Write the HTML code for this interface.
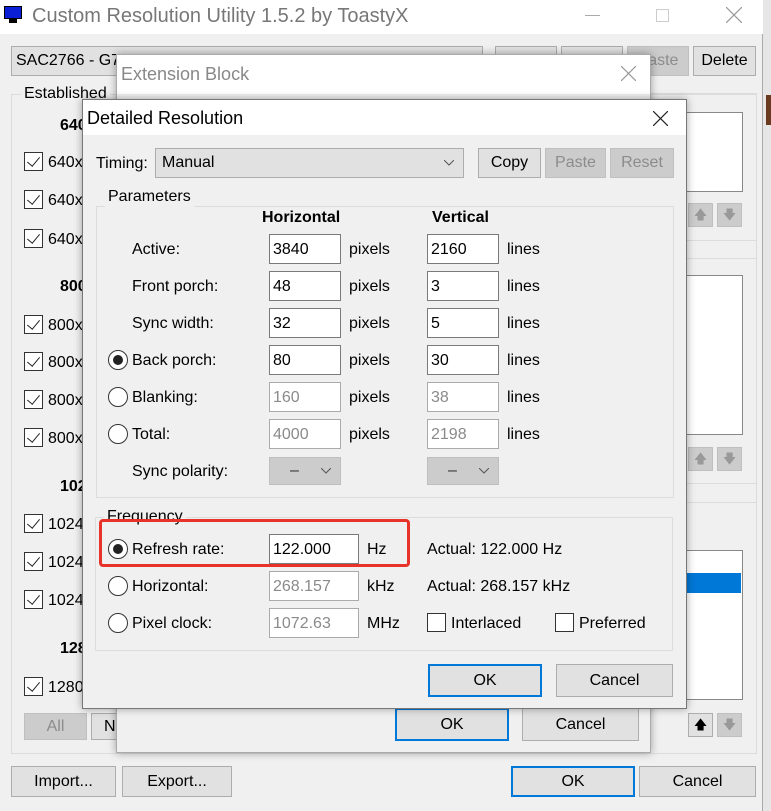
<!DOCTYPE html>
<html><head><meta charset="utf-8"><style>
*{box-sizing:border-box;margin:0;padding:0}
body{width:771px;height:811px;overflow:hidden;background:#f0f0f0;font-family:"Liberation Sans",sans-serif;font-size:16px;color:#000;position:relative}
.a{position:absolute}
.t{position:absolute;white-space:nowrap;line-height:20px}
.btn{position:absolute;background:#e1e1e1;border:1px solid #adadad;text-align:center;white-space:nowrap}
.dis{background:#cccccc;border-color:#bfbfbf;color:#8c8c8c}
.def{border:2px solid #0078d7}
.inp{position:absolute;background:#fff;border:1px solid #7a7a7a;height:30px;line-height:30px;padding-left:3px}
.ro{color:#8a8a8a;border-color:#aaa}
.cb{position:absolute;width:19px;height:19px;border:1px solid #333;background:#fff}
.cb.k::after{content:"";position:absolute;left:5px;top:1px;width:6px;height:11px;border-right:1.5px solid #222;border-bottom:1.5px solid #222;transform:rotate(40deg)}
.rd{position:absolute;width:20px;height:20px;border:1px solid #333;border-radius:50%;background:#fff}
.rd.on::after{content:"";position:absolute;left:4px;top:4px;width:10px;height:10px;border-radius:50%;background:#222}
.grp{position:absolute;border:1px solid #dcdcdc}
.gt{position:absolute;background:#f0f0f0;padding:0 3px;line-height:20px}
.arr{position:absolute;width:25px;height:24px;background:#ccc;border:1px solid #bfbfbf;color:#999;text-align:center;font-size:13px;line-height:22px}
.shadow{box-shadow:0 0 8px rgba(0,0,0,.35)}
.chev{position:absolute;right:9px;top:50%;margin-top:-3px}
</style></head><body>
<div class="a" style="left:763px;top:0;width:8px;height:811px;background:#e6e6e6"></div>
<div class="a" style="left:766px;top:95px;width:5px;height:30px;background:#6a3a20"></div>
<div class="a" style="left:0;top:0;width:763px;height:811px;background:#f0f0f0;border-right:1px solid #aaa"></div>
<div class="a" style="left:0;top:0;width:763px;height:34px;background:#fff"></div>
<div class="a" style="left:4px;top:6px;width:18px;height:13px;background:#0a1fd6;border:1px solid #000"></div>
<div class="a" style="left:9px;top:19px;width:8px;height:4px;background:#000"></div>
<div class="t" style="left:32px;top:5px;font-size:20px;line-height:22px;color:#777">Custom Resolution Utility 1.5.2 by ToastyX</div>
<div class="a" style="left:585px;top:15px;width:15px;height:1px;background:#aaa"></div>
<div class="a" style="left:656px;top:9px;width:13px;height:13px;border:1px solid #ccc"></div>
<svg class="a" style="left:726px;top:7px" width="16" height="16"><path d="M0 0L16 16M16 0L0 16" stroke="#999" stroke-width="1.2"/></svg>

<div class="btn" style="left:11px;top:46px;width:472px;height:30px;text-align:left;padding-left:4px;line-height:28px">SAC2766 - G7</div>
<div class="btn" style="left:495px;top:46px;width:62px;height:30px"></div>
<div class="btn" style="left:561px;top:46px;width:62px;height:30px"></div>
<div class="btn dis" style="left:627px;top:46px;width:62px;height:30px;line-height:28px">Paste</div>
<div class="btn" style="left:693px;top:46px;width:63px;height:30px;line-height:28px">Delete</div>

<div class="grp" style="left:11px;top:94px;width:746px;height:660px"></div>
<div class="gt" style="left:21px;top:84px">Established</div>
<div class="t" style="left:60px;top:116px;font-weight:bold">640</div>
<div class="cb k" style="left:24px;top:152px"></div><div class="t" style="left:48px;top:153px">640x</div>
<div class="cb k" style="left:24px;top:190px"></div><div class="t" style="left:48px;top:191px">640x</div>
<div class="cb k" style="left:24px;top:229px"></div><div class="t" style="left:48px;top:230px">640x</div>
<div class="t" style="left:60px;top:277px;font-weight:bold">800</div>
<div class="cb k" style="left:24px;top:315px"></div><div class="t" style="left:48px;top:316px">800x</div>
<div class="cb k" style="left:24px;top:352px"></div><div class="t" style="left:48px;top:353px">800x</div>
<div class="cb k" style="left:24px;top:390px"></div><div class="t" style="left:48px;top:391px">800x</div>
<div class="cb k" style="left:24px;top:428px"></div><div class="t" style="left:48px;top:429px">800x</div>
<div class="t" style="left:60px;top:477px;font-weight:bold">102</div>
<div class="cb k" style="left:24px;top:514px"></div><div class="t" style="left:48px;top:515px">1024</div>
<div class="cb k" style="left:24px;top:552px"></div><div class="t" style="left:48px;top:553px">1024</div>
<div class="cb k" style="left:24px;top:590px"></div><div class="t" style="left:48px;top:591px">1024</div>
<div class="t" style="left:60px;top:639px;font-weight:bold">128</div>
<div class="cb k" style="left:24px;top:677px"></div><div class="t" style="left:48px;top:678px">1280</div>
<div class="btn dis" style="left:24px;top:713px;width:63px;height:27px;line-height:25px">All</div>
<div class="btn" style="left:91px;top:713px;width:40px;height:27px;line-height:25px;text-align:left;padding-left:12px">No</div>

<div class="grp" style="left:640px;top:93px;width:117px;height:148px"></div>
<div class="a" style="left:640px;top:112px;width:103px;height:80px;background:#fff;border:1px solid #888"></div>
<div class="arr" style="left:688px;top:203px">🡅</div><div class="arr" style="left:717px;top:203px">🡇</div>
<div class="grp" style="left:640px;top:258px;width:117px;height:226px"></div>
<div class="a" style="left:640px;top:275px;width:103px;height:160px;background:#fff;border:1px solid #888"></div>
<div class="arr" style="left:688px;top:447px">🡅</div><div class="arr" style="left:717px;top:447px">🡇</div>
<div class="grp" style="left:640px;top:502px;width:117px;height:252px"></div>
<div class="a" style="left:640px;top:550px;width:103px;height:150px;background:#fff;border:1px solid #888"></div>
<div class="a" style="left:640px;top:573px;width:101px;height:20px;background:#0078d7"></div>
<div class="arr" style="left:688px;top:713px;color:#000;background:#e1e1e1;border-color:#adadad">🡅</div><div class="arr" style="left:717px;top:713px">🡇</div>

<div class="btn" style="left:11px;top:766px;width:105px;height:31px;line-height:29px">Import...</div>
<div class="btn" style="left:122px;top:766px;width:110px;height:31px;line-height:29px">Export...</div>
<div class="btn def" style="left:511px;top:766px;width:124px;height:31px;line-height:27px">OK</div>
<div class="btn" style="left:639px;top:766px;width:117px;height:31px;line-height:29px">Cancel</div>

<!-- Extension Block -->
<div class="a shadow" style="left:116px;top:54px;width:535px;height:699px;background:#f0f0f0;border:1px solid #aaa">
 <div class="a" style="left:0;top:0;width:533px;height:39px;background:#fff"></div>
 <div class="t" style="left:4px;top:8px;font-size:18px;line-height:22px;color:#888">Extension Block</div>
 <svg class="a" style="left:504px;top:11px" width="15" height="15"><path d="M0 0L15 15M15 0L0 15" stroke="#999" stroke-width="1.2"/></svg>
 <div class="btn def" style="left:278px;top:653px;width:114px;height:33px;line-height:29px">OK</div>
 <div class="btn" style="left:405px;top:653px;width:117px;height:33px;line-height:31px">Cancel</div>
</div>

<!-- Detailed Resolution -->
<div class="a shadow" style="left:82px;top:99px;width:605px;height:610px;background:#f0f0f0;border:1px solid #777">
 <div class="a" style="left:0;top:0;width:603px;height:35px;background:#fff"></div>
 <div class="t" style="left:4px;top:7px;font-size:18px;line-height:22px">Detailed Resolution</div>
 <svg class="a" style="left:570px;top:11px" width="15" height="15"><path d="M0 0L15 15M15 0L0 15" stroke="#222" stroke-width="1.2"/></svg>
 <div class="t" style="left:13px;top:54px">Timing:</div>
 <div class="btn" style="left:72px;top:48px;width:309px;height:30px;text-align:left;padding-left:6px;line-height:28px">Manual<svg class="chev" width="10" height="6"><path d="M0 0L5 5L10 0" fill="none" stroke="#555"/></svg></div>
 <div class="btn" style="left:395px;top:48px;width:63px;height:30px;line-height:28px">Copy</div>
 <div class="btn dis" style="left:462px;top:48px;width:61px;height:30px;line-height:28px">Paste</div>
 <div class="btn dis" style="left:527px;top:48px;width:64px;height:30px;line-height:28px">Reset</div>

 <div class="grp" style="left:13px;top:106px;width:578px;height:292px"></div>
 <div class="gt" style="left:22px;top:87px">Parameters</div>
 <div class="t" style="left:179px;top:108px;font-weight:bold">Horizontal</div>
 <div class="t" style="left:349px;top:108px;font-weight:bold">Vertical</div>
</div>
<div class="t" style="left:132px;top:240px">Active:</div>
<div class="inp" style="left:269px;top:234px;width:72px">3840</div><div class="t" style="left:349px;top:240px">pixels</div>
<div class="inp" style="left:427px;top:234px;width:72px">2160</div><div class="t" style="left:507px;top:240px">lines</div>
<div class="t" style="left:132px;top:277px">Front porch:</div>
<div class="inp" style="left:269px;top:271px;width:72px">48</div><div class="t" style="left:349px;top:277px">pixels</div>
<div class="inp" style="left:427px;top:271px;width:72px">3</div><div class="t" style="left:507px;top:277px">lines</div>
<div class="t" style="left:132px;top:314px">Sync width:</div>
<div class="inp" style="left:269px;top:308px;width:72px">32</div><div class="t" style="left:349px;top:314px">pixels</div>
<div class="inp" style="left:427px;top:308px;width:72px">5</div><div class="t" style="left:507px;top:314px">lines</div>
<div class="rd on" style="left:108px;top:350px"></div><div class="t" style="left:132px;top:351px">Back porch:</div>
<div class="inp" style="left:269px;top:345px;width:72px">80</div><div class="t" style="left:349px;top:351px">pixels</div>
<div class="inp" style="left:427px;top:345px;width:72px">30</div><div class="t" style="left:507px;top:351px">lines</div>
<div class="rd" style="left:108px;top:387px"></div><div class="t" style="left:132px;top:388px">Blanking:</div>
<div class="inp ro" style="left:269px;top:382px;width:72px">160</div><div class="t" style="left:349px;top:388px">pixels</div>
<div class="inp ro" style="left:427px;top:382px;width:72px">38</div><div class="t" style="left:507px;top:388px">lines</div>
<div class="rd" style="left:108px;top:424px"></div><div class="t" style="left:132px;top:425px">Total:</div>
<div class="inp ro" style="left:269px;top:419px;width:72px">4000</div><div class="t" style="left:349px;top:425px">pixels</div>
<div class="inp ro" style="left:427px;top:419px;width:72px">2198</div><div class="t" style="left:507px;top:425px">lines</div>
<div class="t" style="left:132px;top:462px">Sync polarity:</div>
<div class="btn dis" style="left:269px;top:457px;width:72px;height:28px;color:#333;line-height:26px;text-align:left;padding-left:20px">–<svg class="chev" width="10" height="6"><path d="M0 0L5 5L10 0" fill="none" stroke="#555"/></svg></div>
<div class="btn dis" style="left:427px;top:457px;width:72px;height:28px;color:#333;line-height:26px;text-align:left;padding-left:20px">–<svg class="chev" width="10" height="6"><path d="M0 0L5 5L10 0" fill="none" stroke="#555"/></svg></div>

<div class="grp" style="left:95px;top:517px;width:578px;height:134px"></div>
<div class="gt" style="left:104px;top:507px">Frequency</div>
<div class="rd on" style="left:108px;top:539px"></div><div class="t" style="left:132px;top:540px">Refresh rate:</div>
<div class="inp" style="left:269px;top:534px;width:90px">122.000</div><div class="t" style="left:367px;top:540px">Hz</div>
<div class="t" style="left:427px;top:540px">Actual: 122.000 Hz</div>
<div class="rd" style="left:108px;top:576px"></div><div class="t" style="left:132px;top:577px">Horizontal:</div>
<div class="inp ro" style="left:269px;top:571px;width:90px">268.157</div><div class="t" style="left:367px;top:577px">kHz</div>
<div class="t" style="left:427px;top:577px">Actual: 268.157 kHz</div>
<div class="rd" style="left:108px;top:613px"></div><div class="t" style="left:132px;top:614px">Pixel clock:</div>
<div class="inp ro" style="left:269px;top:608px;width:90px">1072.63</div><div class="t" style="left:367px;top:614px">MHz</div>
<div class="cb" style="left:427px;top:613px"></div><div class="t" style="left:451px;top:614px">Interlaced</div>
<div class="cb" style="left:555px;top:613px"></div><div class="t" style="left:579px;top:614px">Preferred</div>
<div class="a" style="left:99px;top:519px;width:311px;height:48px;border:3.5px solid #e8332a;border-radius:4px"></div>

<div class="btn def" style="left:428px;top:664px;width:114px;height:33px;line-height:29px">OK</div>
<div class="btn" style="left:556px;top:664px;width:117px;height:33px;line-height:31px">Cancel</div>
</body></html>
